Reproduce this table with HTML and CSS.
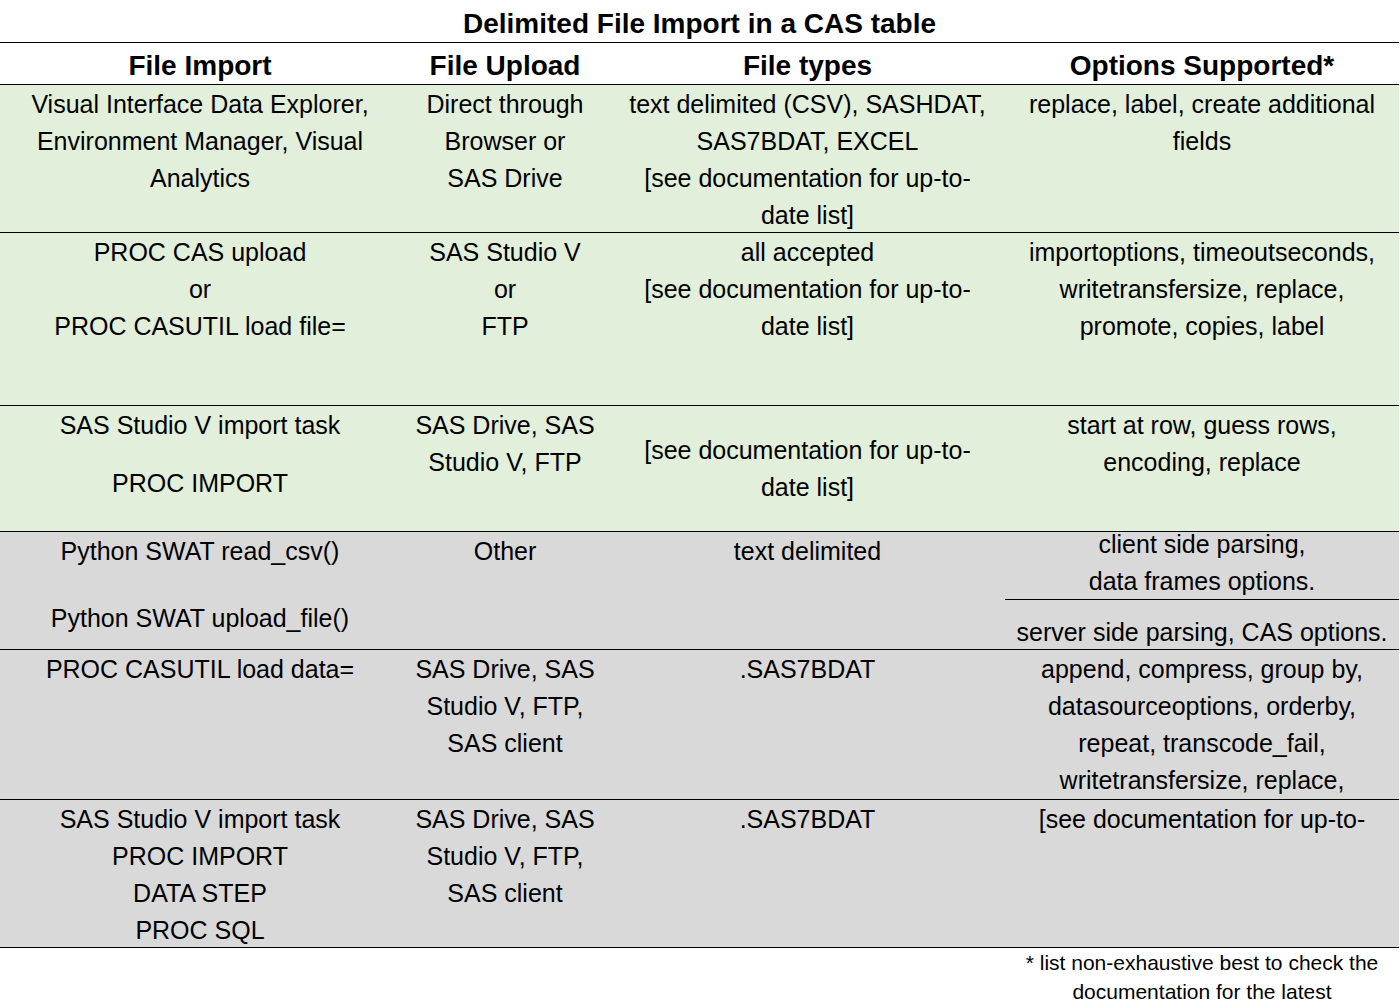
FILE: index.html
```html
<!DOCTYPE html>
<html lang="en">
<head>
<meta charset="utf-8">
<title>Delimited File Import in a CAS table</title>
<link rel="stylesheet" href="styles.css">
</head>
<body>
<div class="sheet">
  <div class="title">Delimited File Import in a CAS table</div>

  <div class="row head">
    <div class="cell">File Import</div>
    <div class="cell">File Upload</div>
    <div class="cell">File types</div>
    <div class="cell">Options Supported*</div>
  </div>

  <div class="row green r1">
    <div class="cell">
      <div class="ln">Visual Interface Data Explorer,</div>
      <div class="ln">Environment Manager, Visual</div>
      <div class="ln">Analytics</div>
    </div>
    <div class="cell">
      <div class="ln">Direct through</div>
      <div class="ln">Browser or</div>
      <div class="ln">SAS Drive</div>
    </div>
    <div class="cell">
      <div class="ln">text delimited (CSV), SASHDAT,</div>
      <div class="ln">SAS7BDAT, EXCEL</div>
      <div class="ln">[see documentation for up-to-</div>
      <div class="ln">date list]</div>
    </div>
    <div class="cell">
      <div class="ln">replace, label, create additional</div>
      <div class="ln">fields</div>
    </div>
  </div>

  <div class="row green r2">
    <div class="cell">
      <div class="ln">PROC CAS upload</div>
      <div class="ln">or</div>
      <div class="ln">PROC CASUTIL load file=</div>
    </div>
    <div class="cell">
      <div class="ln">SAS Studio V</div>
      <div class="ln">or</div>
      <div class="ln">FTP</div>
    </div>
    <div class="cell">
      <div class="ln">all accepted</div>
      <div class="ln">[see documentation for up-to-</div>
      <div class="ln">date list]</div>
    </div>
    <div class="cell">
      <div class="ln">importoptions, timeoutseconds,</div>
      <div class="ln">writetransfersize, replace,</div>
      <div class="ln">promote, copies, label</div>
    </div>
  </div>

  <div class="row green r3">
    <div class="cell">
      <div class="ln">SAS Studio V import task</div>
      <div class="ln gap-sm">PROC IMPORT</div>
    </div>
    <div class="cell">
      <div class="ln">SAS Drive, SAS</div>
      <div class="ln">Studio V, FTP</div>
    </div>
    <div class="cell push">
      <div class="ln">[see documentation for up-to-</div>
      <div class="ln">date list]</div>
    </div>
    <div class="cell">
      <div class="ln">start at row, guess rows,</div>
      <div class="ln">encoding, replace</div>
    </div>
  </div>

  <div class="row gray r4">
    <div class="cell">
      <div class="ln">Python SWAT read_csv()</div>
      <div class="ln gap-lg">Python SWAT upload_file()</div>
    </div>
    <div class="cell">
      <div class="ln">Other</div>
    </div>
    <div class="cell">
      <div class="ln">text delimited</div>
    </div>
    <div class="cell split">
      <div class="split-top">
        <div class="ln first">client side parsing,</div>
        <div class="ln second">data frames options.</div>
      </div>
      <div class="split-bottom">
        <div class="ln">server side parsing, CAS options.</div>
      </div>
    </div>
  </div>

  <div class="row gray r5">
    <div class="cell">
      <div class="ln">PROC CASUTIL load data=</div>
    </div>
    <div class="cell">
      <div class="ln">SAS Drive, SAS</div>
      <div class="ln">Studio V, FTP,</div>
      <div class="ln">SAS client</div>
    </div>
    <div class="cell">
      <div class="ln">.SAS7BDAT</div>
    </div>
    <div class="cell">
      <div class="ln">append, compress, group by,</div>
      <div class="ln">datasourceoptions, orderby,</div>
      <div class="ln">repeat, transcode_fail,</div>
      <div class="ln">writetransfersize, replace,</div>
    </div>
  </div>

  <div class="row gray r6">
    <div class="cell">
      <div class="ln">SAS Studio V import task</div>
      <div class="ln">PROC IMPORT</div>
      <div class="ln">DATA STEP</div>
      <div class="ln">PROC SQL</div>
    </div>
    <div class="cell">
      <div class="ln">SAS Drive, SAS</div>
      <div class="ln">Studio V, FTP,</div>
      <div class="ln">SAS client</div>
    </div>
    <div class="cell">
      <div class="ln">.SAS7BDAT</div>
    </div>
    <div class="cell">
      <div class="ln">[see documentation for up-to-</div>
    </div>
  </div>

  <div class="foot">
    <div class="foot-note">
      <div class="fl">* list non-exhaustive best to check the</div>
      <div class="fl">documentation for the latest</div>
    </div>
  </div>
</div>
</body>
</html>
```

FILE: styles.css
```css
html, body {
  margin: 0;
  padding: 0;
  background: #ffffff;
}

body {
  font-family: "Liberation Sans", Arial, sans-serif;
  color: #000000;
  width: 1400px;
  height: 1007px;
  overflow: hidden;
}

.sheet {
  width: 1399px;
}

.title {
  height: 43px;
  box-sizing: border-box;
  padding-top: 5px;
  line-height: 37px;
  font-size: 28px;
  font-weight: bold;
  text-align: center;
  border-bottom: 1px solid #000;
  white-space: nowrap;
}

.row {
  display: grid;
  grid-template-columns: 400px 210px 395px 394px;
  border-bottom: 1px solid #000;
  box-sizing: content-box;
}

.cell {
  text-align: center;
  white-space: nowrap;
  font-size: 25px;
  line-height: 37px;
  padding-top: 1px;
  min-width: 0;
}

.head {
  height: 41px;
}

.head .cell {
  font-size: 28px;
  font-weight: bold;
  line-height: 41px;
  padding-top: 2px;
}

.green { background: #e2efda; }
.gray { background: #d9d9d9; }

.r1 { height: 147px; }
.r2 { height: 172px; }
.r3 { height: 125px; }
.r4 { height: 117px; }
.r5 { height: 149px; }
.r6 { height: 147px; }

.gap-sm { margin-top: 21px; }
.gap-lg { margin-top: 30px; }
.push { padding-top: 26px; }

.split {
  padding-top: 0;
  display: flex;
  flex-direction: column;
}

.split-top {
  height: 67px;
  flex: none;
  border-bottom: 1px solid #000;
}

.split-top .first {
  line-height: 25px;
}

.split-top .second {
  margin-top: 6px;
  line-height: 36px;
}

.split-bottom {
  flex: none;
  height: 49px;
  padding-top: 14px;
  box-sizing: border-box;
}

.foot {
  display: flex;
  justify-content: flex-end;
}

.foot-note {
  width: 394px;
  text-align: center;
  font-size: 21px;
  line-height: 29px;
  padding-top: 0;
  white-space: nowrap;
}
```
